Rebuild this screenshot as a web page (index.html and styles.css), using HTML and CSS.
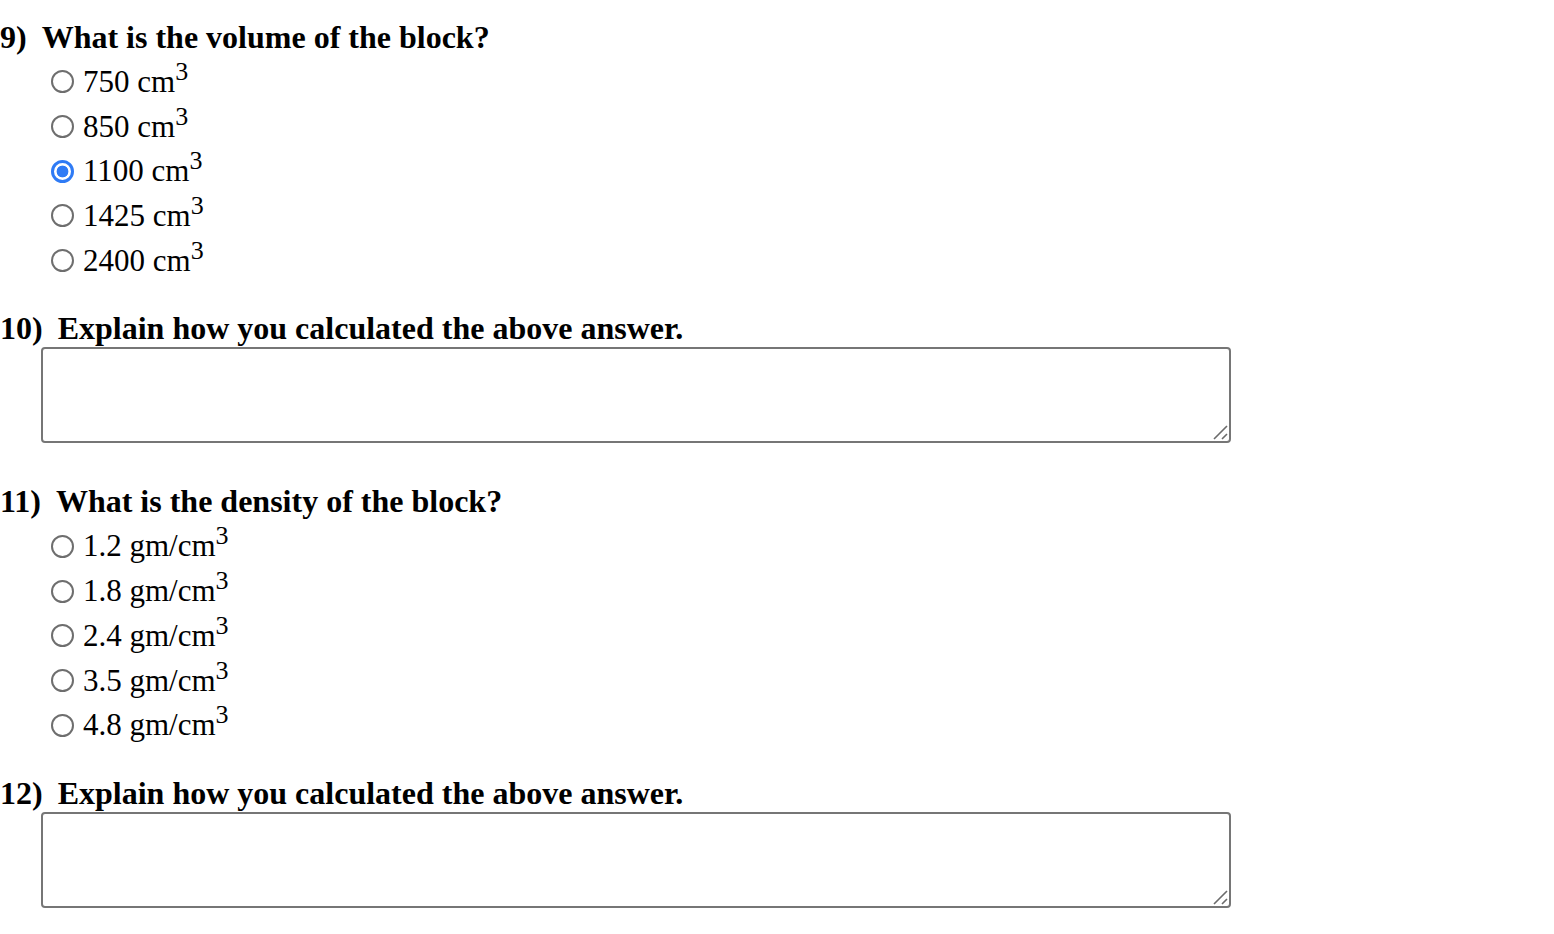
FILE: index.html
```html
<!DOCTYPE html>
<html lang="en">
<head>
    <meta charset="UTF-8">
    <title>Block Density Quiz</title>
    <link rel="stylesheet" href="styles.css">
</head>
<body>
    <form class="quiz">
        <!-- question 9 -->
        <div class="question">
            <p class="prompt"><span class="num">9)</span>What is the volume of the block?</p>
            <div class="options">
                <label class="option"><input type="radio" name="q9" value="750">750 cm<sup>3</sup></label>
                <label class="option"><input type="radio" name="q9" value="850">850 cm<sup>3</sup></label>
                <label class="option"><input type="radio" name="q9" value="1100" checked>1100 cm<sup>3</sup></label>
                <label class="option"><input type="radio" name="q9" value="1425">1425 cm<sup>3</sup></label>
                <label class="option"><input type="radio" name="q9" value="2400">2400 cm<sup>3</sup></label>
            </div>
        </div>

        <!-- question 10 -->
        <div class="question text-question">
            <p class="prompt"><span class="num">10)</span>Explain how you calculated the above answer.</p>
            <div class="answer-wrap">
                <textarea class="answer" name="q10"></textarea>
                <svg class="grip" width="18" height="18" viewBox="0 0 18 18"><path d="M3 16 L16 3 M11 16 L16 11" stroke="#6b6b6b" stroke-width="1.6" fill="none"/></svg>
            </div>
        </div>

        <!-- question 11 -->
        <div class="question">
            <p class="prompt"><span class="num">11)</span>What is the density of the block?</p>
            <div class="options">
                <label class="option"><input type="radio" name="q11" value="1.2">1.2 gm/cm<sup>3</sup></label>
                <label class="option"><input type="radio" name="q11" value="1.8">1.8 gm/cm<sup>3</sup></label>
                <label class="option"><input type="radio" name="q11" value="2.4">2.4 gm/cm<sup>3</sup></label>
                <label class="option"><input type="radio" name="q11" value="3.5">3.5 gm/cm<sup>3</sup></label>
                <label class="option"><input type="radio" name="q11" value="4.8">4.8 gm/cm<sup>3</sup></label>
            </div>
        </div>

        <!-- question 12 -->
        <div class="question text-question">
            <p class="prompt"><span class="num">12)</span>Explain how you calculated the above answer.</p>
            <div class="answer-wrap">
                <textarea class="answer" name="q12"></textarea>
                <svg class="grip" width="18" height="18" viewBox="0 0 18 18"><path d="M3 16 L16 3 M11 16 L16 11" stroke="#6b6b6b" stroke-width="1.6" fill="none"/></svg>
            </div>
        </div>
    </form>
</body>
</html>
```

FILE: styles.css
```css
body {
    margin: 0;
    padding-top: 20px;
    font-family: "Liberation Serif", "Times New Roman", serif;
    color: #000;
    background: white;
}
.question {
    margin-bottom: 28px;
}
.text-question {
    margin-bottom: 41px;
}
.prompt {
    margin: 0;
    font-size: 32px;
    font-weight: bold;
    line-height: 34px;
}
.num {
    margin-right: 15px;
}
.options {
    padding-left: 41px;
    margin-top: 6px;
}
.option {
    display: block;
    height: 44.7px;
    line-height: 44.7px;
    font-size: 31px;
    white-space: nowrap;
}
.option input {
    appearance: none;
    -webkit-appearance: none;
    box-sizing: border-box;
    width: 23px;
    height: 23px;
    margin: 0 9px 0 10px;
    border: 2px solid #6e6e6e;
    border-radius: 50%;
    background: white;
    vertical-align: middle;
    position: relative;
    top: -3px;
}
.option input:checked {
    border: 3px solid #2f7bf5;
    background: radial-gradient(circle, #2f7bf5 0 5.6px, white 6.2px);
}
.option sup {
    font-size: 26px;
    line-height: 0;
    vertical-align: 12px;
}
.answer-wrap {
    position: relative;
    width: 1190px;
    padding-left: 41px;
    margin-top: 2px;
    line-height: 0;
}
.answer {
    display: block;
    width: 1190px;
    height: 96px;
    margin: 0;
    box-sizing: border-box;
    border: 2px solid #767676;
    border-radius: 4px;
    resize: none;
}
.grip {
    position: absolute;
    right: 2px;
    bottom: 2px;
}
```
